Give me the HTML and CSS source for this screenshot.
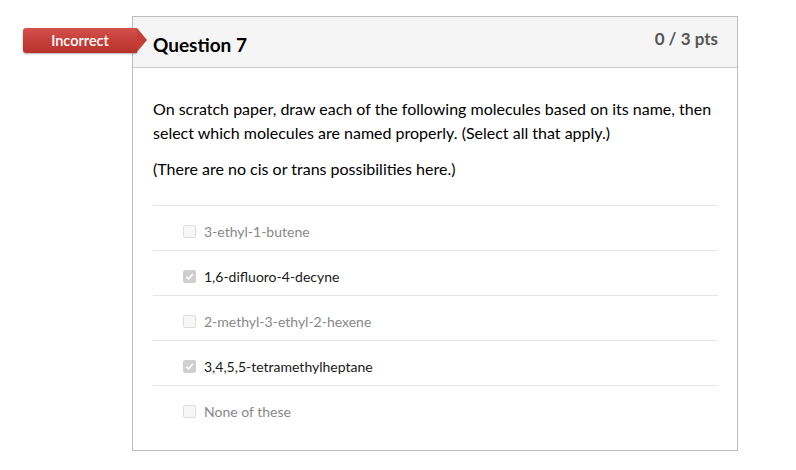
FILE: index.html
```html
<!DOCTYPE html>
<html>
<head>
<meta charset="utf-8">
<link rel="stylesheet" href="styles.css">
</head>
<body>
<div class="page">
  <div class="card">
    <div class="badge">Incorrect</div>
    <div class="header">
      <span class="title">Question 7</span>
      <span class="pts">0 / 3 pts</span>
    </div>
    <div class="body">
      <p class="text">On scratch paper, draw each of the following molecules based on its name, then select which molecules are named properly. (Select all that apply.)</p>
      <p class="text">(There are no cis or trans possibilities here.)</p>
      <ul class="answers">
        <li class="answer"><span class="box"></span><span class="label">3-ethyl-1-butene</span></li>
        <li class="answer checked"><span class="box"><svg viewBox="0 0 12 12" width="12" height="12"><path d="M2.5 6.3 L5 8.6 L9.6 3.4" fill="none" stroke="#fff" stroke-width="1.8"/></svg></span><span class="label">1,6-difluoro-4-decyne</span></li>
        <li class="answer"><span class="box"></span><span class="label">2-methyl-3-ethyl-2-hexene</span></li>
        <li class="answer checked"><span class="box"><svg viewBox="0 0 12 12" width="12" height="12"><path d="M2.5 6.3 L5 8.6 L9.6 3.4" fill="none" stroke="#fff" stroke-width="1.8"/></svg></span><span class="label">3,4,5,5-tetramethylheptane</span></li>
        <li class="answer"><span class="box"></span><span class="label">None of these</span></li>
      </ul>
    </div>
  </div>
</div>
</body>
</html>
```
FILE: styles.css
```css
html, body {
  margin: 0;
  padding: 0;
  background: #fff;
  font-family: Lato, "Liberation Sans", sans-serif;
  color: #2d3b45;
}
.page {
  padding: 16px 0 0 132px;
}
.card {
  position: relative;
  width: 604px;
  height: 433px;
  border: 1px solid #bdbdbd;
}
.badge {
  position: absolute;
  left: -110px;
  top: 11px;
  width: 114px;
  height: 25px;
  line-height: 25px;
  text-align: center;
  color: #fff;
  font-size: 14.5px;
  font-weight: 600;
  background: linear-gradient(#d4504a, #b8302a);
  border-radius: 3px 0 0 3px;
  box-shadow: 0 1px 2px rgba(0,0,0,0.3);
  z-index: 2;
}
.badge::after {
  content: "";
  position: absolute;
  right: -10px;
  top: 0;
  border-top: 12.5px solid transparent;
  border-bottom: 12.5px solid transparent;
  border-left: 10px solid #c53d37;
}
.header {
  height: 50px;
  background: #f5f5f5;
  border-bottom: 1px solid #c7c7c7;
  display: flex;
  justify-content: space-between;
  padding: 0 19px 0 20px;
}
.title {
  font-size: 19px;
  font-weight: bold;
  color: #000;
  margin-top: 16px;
}
.pts {
  font-size: 17px;
  font-weight: bold;
  color: #555;
  margin-top: 11px;
}
.body {
  padding: 29px 19px 0 20px;
}
.text {
  margin: 0 0 12px;
  font-size: 16px;
  line-height: 24px;
  color: #000;
}
.answers {
  list-style: none;
  margin: 24px 0 0;
  padding: 0;
}
.answer {
  height: 45px;
  border-top: 1px solid #e6e6e6;
  display: flex;
  align-items: center;
  padding-left: 30px;
  padding-top: 7px;
  box-sizing: border-box;
  font-size: 14px;
  color: #888;
}
.answer.checked { color: #1a1a1a; }
.box {
  width: 11px;
  height: 11px;
  border: 1px solid #ddd;
  background: #f7f7f7;
  border-radius: 2px;
  margin-right: 8px;
  display: flex;
  align-items: center;
  justify-content: center;
}
.checked .box {
  background: #cfcfcf;
  border-color: #cfcfcf;
}
.box svg { width: 11px; height: 11px; }
```
